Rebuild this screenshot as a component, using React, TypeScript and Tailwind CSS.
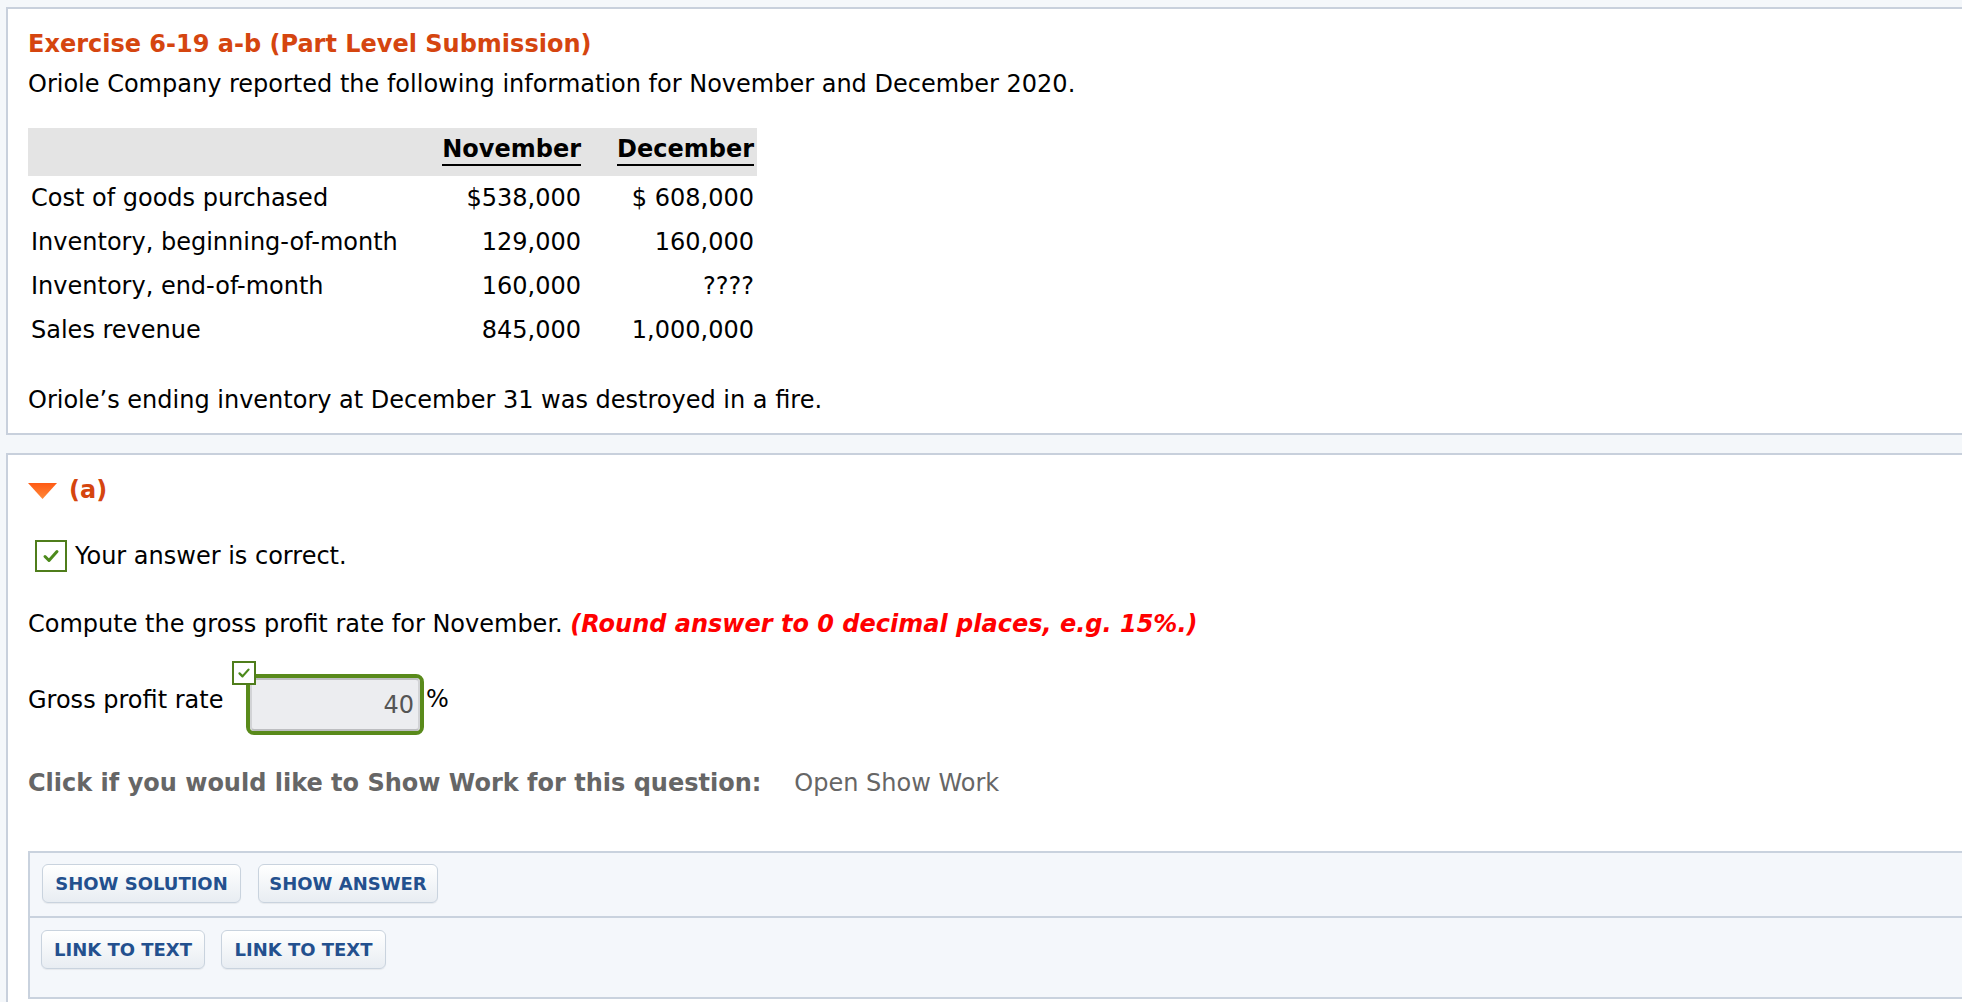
import React from 'react';

const rows = [
  { label: 'Cost of goods purchased', nov: '$538,000', dec: '$ 608,000' },
  { label: 'Inventory, beginning-of-month', nov: '129,000', dec: '160,000' },
  { label: 'Inventory, end-of-month', nov: '160,000', dec: '????' },
  { label: 'Sales revenue', nov: '845,000', dec: '1,000,000' },
];

const bold = "font-['DejaVu_Sans',sans-serif] font-bold";

const CheckMark = ({ className }: { className?: string }) => (
  <svg viewBox="0 0 24 24" className={className} fill="none">
    <path d="M6 12.5l4 4 8-9" stroke="#4c8a1b" strokeWidth="3" strokeLinecap="round" strokeLinejoin="round" />
  </svg>
);

const ToolButton = ({ label, width }: { label: string; width: string }) => (
  <button
    className={`${bold} ${width} h-[39px] rounded-[6px] border border-[#c9d3de] bg-gradient-to-b from-white to-[#e8edf2] text-[18px] text-[#23508e] shadow-[0_1px_1px_rgba(0,0,0,0.06)]`}
  >
    {label}
  </button>
);

const App: React.FC = () => {
  return (
    <div className="min-h-screen overflow-hidden bg-[#f4f7fa] pt-[7px] pl-[6px] font-['DejaVu_Sans',sans-serif] text-[24px] text-black">
      {/* Exercise header panel */}
      <div className="border-y-2 border-l-2 border-[#c8d0dc] bg-white pt-[20px] pb-[18px] pl-[20px]">
        <h1 className={`${bold} text-[24px] leading-[30px] text-[#d5450f]`}>
          Exercise 6-19 a-b (Part Level Submission)
        </h1>
        <p className="mt-[10px] leading-[30px]">
          Oriole Company reported the following information for November and December 2020.
        </p>

        <div className="mt-[29px] w-[729px]">
          <div className="grid h-[48px] grid-cols-[392px_161px_176px] bg-[#e4e4e4]">
            <div />
            <div className="flex items-end justify-end pb-[10px]">
              <span className={`${bold} border-b-2 border-black pb-[3px] leading-[24px]`}>November</span>
            </div>
            <div className="flex items-end justify-end pr-[3px] pb-[10px]">
              <span className={`${bold} border-b-2 border-black pb-[3px] leading-[24px]`}>December</span>
            </div>
          </div>
          {rows.map((r) => (
            <div key={r.label} className="grid h-[44px] grid-cols-[392px_161px_176px] items-center">
              <div className="pl-[3px]">{r.label}</div>
              <div className="text-right">{r.nov}</div>
              <div className="pr-[3px] text-right">{r.dec}</div>
            </div>
          ))}
        </div>

        <p className="mt-[33px] leading-[30px]">Oriole’s ending inventory at December 31 was destroyed in a fire.</p>
      </div>

      {/* Part (a) panel */}
      <div className="mt-[18px] border-t-2 border-l-2 border-[#c8d0dc] bg-white pt-[20px] pb-[24px] pl-[20px]">
        <div className="flex h-[30px] items-center">
          <svg width="29" height="16" viewBox="0 0 29 16" className="mt-[1px]">
            <defs>
              <linearGradient id="tri" x1="0" y1="0" x2="0" y2="1">
                <stop offset="0" stopColor="#ff5a14" />
                <stop offset="1" stopColor="#ff8a3a" />
              </linearGradient>
            </defs>
            <path d="M0 0h29L14.5 16z" fill="url(#tri)" />
          </svg>
          <span className={`${bold} ml-[12px] leading-[30px] text-[#d5450f]`}>(a)</span>
        </div>

        <div className="mt-[35px] flex items-center pl-[7px]">
          <div className="flex h-[32px] w-[32px] items-center justify-center border-2 border-[#4f7d1b] bg-white">
            <CheckMark className="h-[24px] w-[24px]" />
          </div>
          <span className="ml-[8px] leading-[30px]">Your answer is correct.</span>
        </div>

        <p className="mt-[37px] leading-[30px]">
          Compute the gross profit rate for November.{' '}
          <span className={`${bold} italic text-[#ff0000]`}>(Round answer to 0 decimal places, e.g. 15%.)</span>
        </p>

        <div className="mt-[22px] flex items-start">
          <div className="mt-[24px] w-[218px] leading-[30px]">Gross profit rate</div>
          <div className="relative pt-[13px]">
            <div className="absolute top-0 left-[-14px] z-10 flex h-[24px] w-[24px] items-center justify-center border-2 border-[#4f7d1b] bg-white">
              <CheckMark className="h-[18px] w-[18px]" />
            </div>
            <div className="h-[61px] w-[178px] rounded-[8px] border-4 border-[#598a1b] bg-[#ecedf0]">
              <div className="flex h-full items-center justify-end rounded-[4px] border-2 border-[#d2d3d6] border-t-[#bdbec1] border-b-[#bdbec1] pr-[4px] text-[#555]">
                40
              </div>
            </div>
          </div>
          <span className="mt-[23px] ml-[2px] leading-[30px]">%</span>
        </div>

        <div className="mt-[33px] flex items-center leading-[30px]">
          <span className={`${bold} text-[#666]`}>Click if you would like to Show Work for this question:</span>
          <span className="ml-[33px] text-[#666]">Open Show Work</span>
        </div>

        <div className="mt-[53px] border-y-2 border-l-2 border-[#c9d2de] bg-[#f4f7fb]">
          <div className="flex gap-[17px] pt-[11px] pb-[13px] pl-[12px]">
            <ToolButton label="SHOW SOLUTION" width="w-[199px]" />
            <ToolButton label="SHOW ANSWER" width="w-[180px]" />
          </div>
          <div className="flex gap-[16px] border-t-2 border-[#c9d2de] pt-[12px] pb-[28px] pl-[11px]">
            <ToolButton label="LINK TO TEXT" width="w-[164px]" />
            <ToolButton label="LINK TO TEXT" width="w-[165px]" />
          </div>
        </div>
      </div>
    </div>
  );
};

export default App;
